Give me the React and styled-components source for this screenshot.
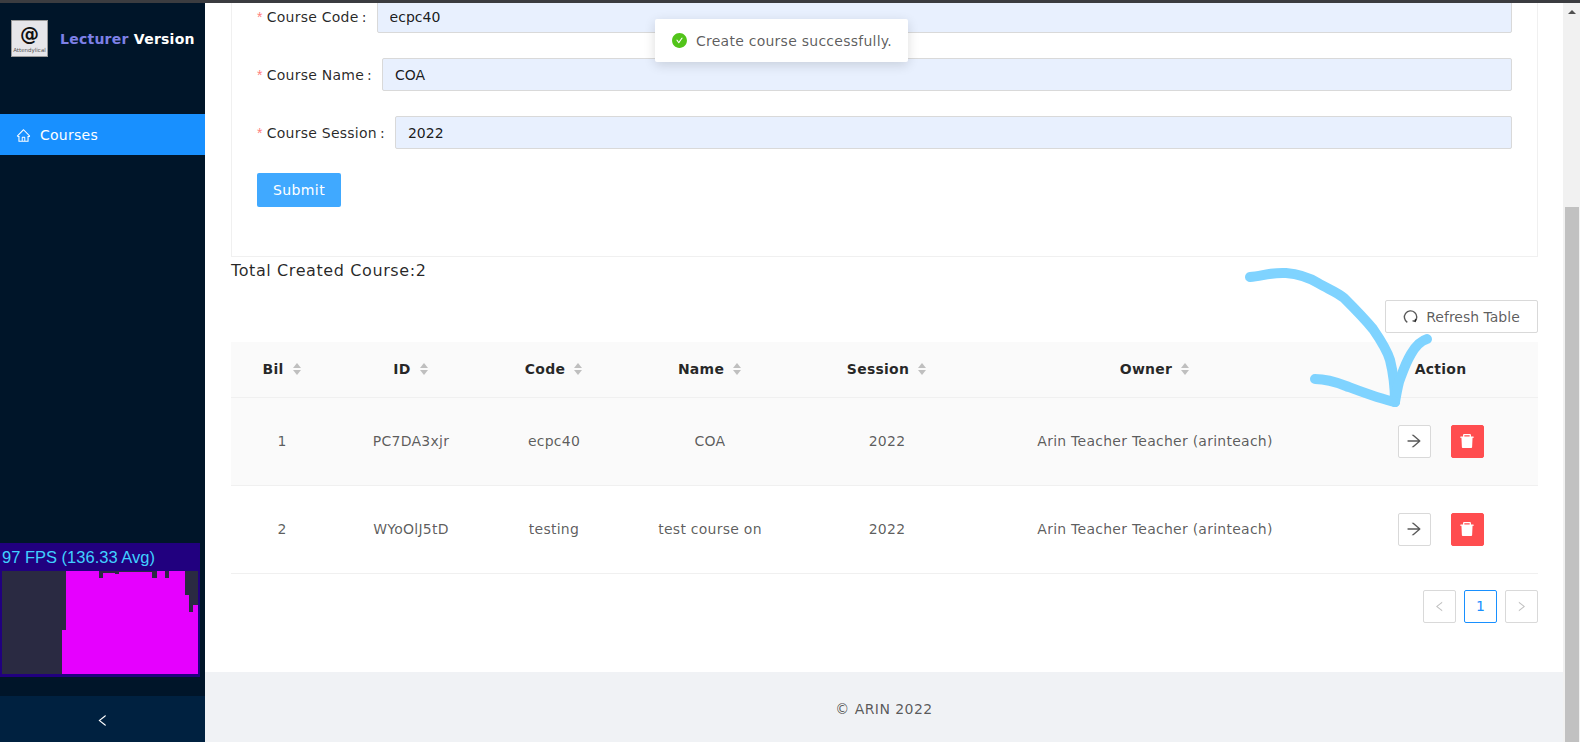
import React from "react";
import styled, { createGlobalStyle } from "styled-components";
import {
  AiOutlineHome,
  AiOutlineArrowRight,
  AiFillDelete,
  AiOutlineLeft,
  AiOutlineRight,
  AiFillCheckCircle,
} from "react-icons/ai";

const GlobalStyle = createGlobalStyle`
  html, body {
    margin: 0;
    height: 100%;
    overflow: hidden;
  }
  body {
    font-family: "DejaVu Sans", Verdana, sans-serif;
    font-size: 14px;
    letter-spacing: 0.25px;
    color: rgba(0, 0, 0, 0.85);
    background: #fff;
  }
  * {
    box-sizing: border-box;
  }
`;

const Page = styled.div`
  position: relative;
  display: flex;
  flex-direction: column;
  width: 100%;
  height: 742px;
  overflow: hidden;
`;

const TopEdge = styled.div`
  flex: 0 0 3px;
  background: #3b3c40;
`;

const Body = styled.div`
  flex: 1;
  display: flex;
  min-height: 0;
`;

const Sidebar = styled.aside`
  flex: 0 0 205px;
  display: flex;
  flex-direction: column;
  background: #001529;
`;

const Brand = styled.div`
  display: flex;
  align-items: center;
  gap: 12px;
  height: 37px;
  margin: 17px 0 57px 11px;
`;

const Logo = styled.div`
  width: 37px;
  height: 37px;
  display: flex;
  flex-direction: column;
  align-items: center;
  background: #e6e6ea;
  border: 1px solid #9a9a9a;
  color: #111;
  letter-spacing: 0;
`;

const LogoAt = styled.span`
  font-size: 19px;
  font-weight: 700;
  line-height: 26px;
`;

const LogoName = styled.span`
  font-size: 5.5px;
  line-height: 7px;
  color: #555;
  white-space: nowrap;
`;

const BrandTitle = styled.div`
  font-size: 14px;
  font-weight: 700;
  color: #fff;
  white-space: nowrap;
`;

const BrandAccent = styled.span`
  color: #7d80e6;
`;

const MenuItem = styled.div`
  display: flex;
  align-items: center;
  gap: 9px;
  height: 41px;
  padding: 1px 0 0 16px;
  background: #1890ff;
  color: #fff;
  font-size: 14px;

  svg {
    font-size: 15px;
  }
`;

const SideSpacer = styled.div`
  flex: 1;
`;

const FpsPanel = styled.div`
  width: 200px;
  height: 134px;
  margin-bottom: 19px;
  padding: 0 2px;
  background: #21007f;
  letter-spacing: 0;
`;

const FpsLabel = styled.div`
  font-family: "Liberation Sans", Arial, sans-serif;
  font-size: 16.5px;
  line-height: 28px;
  height: 28px;
  color: #40d0ff;
  white-space: nowrap;
`;

const FpsGraph = styled.svg`
  display: block;
  width: 196px;
  height: 103px;
`;

const Collapse = styled.div`
  flex: 0 0 46px;
  display: flex;
  align-items: center;
  justify-content: center;
  padding-top: 3px;
  background: #002140;
  color: #fff;
  font-size: 15px;
`;

const Main = styled.main`
  flex: 1;
  min-width: 0;
  display: flex;
  flex-direction: column;
  overflow: hidden;
`;

const Content = styled.div`
  flex: 1;
  padding: 0 25px 0 26px;
`;

const FormCard = styled.form`
  height: 257px;
  margin-top: -3px;
  padding: 0 25px;
  border: 1px solid #f0f0f0;
  border-top: 0;
`;

const Row = styled.div`
  display: flex;
  align-items: center;
  height: 33px;
  margin-bottom: 25px;
`;

const Label = styled.label`
  display: flex;
  align-items: center;
  margin-right: 10px;
  white-space: nowrap;
  font-size: 14px;
`;

const Star = styled.span`
  margin-right: 4px;
  color: #ff7f80;
  font-family: "Liberation Sans", sans-serif;
`;

const Colon = styled.span`
  margin-left: 3px;
`;

const Input = styled.input`
  flex: 1;
  height: 33px;
  padding: 0 12px;
  border: 1px solid #d9d9d9;
  border-radius: 2px;
  background: #e8f0fe;
  color: rgba(0, 0, 0, 0.9);
  font: inherit;
  font-size: 14px;
  letter-spacing: 0;
`;

const Submit = styled.button`
  display: block;
  width: 84px;
  height: 34px;
  margin-top: -1px;
  border: 0;
  border-radius: 2px;
  background: #40a9ff;
  color: #fff;
  font: inherit;
  font-size: 14px;
  letter-spacing: 0.4px;
`;

const Total = styled.div`
  margin-top: 2px;
  font-size: 16px;
  line-height: 24px;
  letter-spacing: 0.6px;
`;

const Toolbar = styled.div`
  display: flex;
  justify-content: flex-end;
  margin: 17px 0 9px;
`;

const RefreshButton = styled.button`
  display: flex;
  align-items: center;
  justify-content: center;
  gap: 8px;
  width: 153px;
  height: 33px;
  border: 1px solid #d9d9d9;
  border-radius: 2px;
  background: #fff;
  color: rgba(0, 0, 0, 0.65);
  font: inherit;
  font-size: 14px;
`;

const RefreshIcon = styled.svg`
  width: 15px;
  height: 15px;
  fill: none;
  stroke: currentColor;
  stroke-width: 1.5;
`;

const Table = styled.table`
  width: 1307px;
  table-layout: fixed;
  border-collapse: collapse;
`;

const Th = styled.th`
  height: 55px;
  padding: 0 0 0 ${(p) => (p.$action ? "6px" : "0")};
  background: #fafafa;
  border-bottom: 1px solid #f0f0f0;
  font-size: 14px;
  font-weight: 700;
  text-align: center;
`;

const ThInner = styled.span`
  display: inline-flex;
  align-items: center;
  gap: 8px;
`;

const Sorter = styled.svg`
  width: 10px;
  height: 14px;
  fill: #bfbfbf;
`;

const Tr = styled.tr`
  background: ${(p) => (p.$hover ? "#fafafa" : "#fff")};
`;

const Td = styled.td`
  height: 88px;
  padding: 0 0 0 ${(p) => (p.$action ? "6px" : "0")};
  border-bottom: 1px solid #f0f0f0;
  color: rgba(0, 0, 0, 0.65);
  font-size: 14px;
  text-align: center;
`;

const Actions = styled.div`
  display: flex;
  justify-content: center;
  gap: 20px;
`;

const IconButton = styled.button`
  display: flex;
  align-items: center;
  justify-content: center;
  width: 33px;
  height: 33px;
  padding: 0;
  border: 1px solid ${(p) => (p.$danger ? "#ff4d4f" : "#d9d9d9")};
  border-radius: 2px;
  background: ${(p) => (p.$danger ? "#ff4d4f" : "#fff")};
  color: ${(p) => (p.$danger ? "#fff" : "rgba(0, 0, 0, 0.65)")};
  font-size: 18px;
`;

const Pagination = styled.div`
  display: flex;
  justify-content: flex-end;
  gap: 8px;
  margin-top: 16px;
`;

const PageItem = styled.div`
  display: flex;
  align-items: center;
  justify-content: center;
  width: 33px;
  height: 33px;
  border: 1px solid ${(p) => (p.$active ? "#1890ff" : "#d9d9d9")};
  border-radius: 2px;
  color: ${(p) => (p.$active ? "#1890ff" : "rgba(0, 0, 0, 0.25)")};
  font-size: 14px;

  svg {
    font-size: 13px;
  }
`;

const Footer = styled.footer`
  flex: 0 0 70px;
  display: flex;
  align-items: center;
  justify-content: center;
  padding-top: 3px;
  background: #f0f2f5;
  color: rgba(0, 0, 0, 0.65);
  font-size: 14px;
  letter-spacing: 0.45px;
`;

const Scrollbar = styled.div`
  flex: 0 0 17px;
  display: flex;
  flex-direction: column;
  background: #f1f1f1;
`;

const ScrollUp = styled.div`
  flex: 0 0 204px;
  display: flex;
  justify-content: center;
  padding-top: 7px;

  &::before {
    content: "";
    width: 0;
    height: 0;
    border-left: 4px solid transparent;
    border-right: 4px solid transparent;
    border-bottom: 4px solid #505050;
  }
`;

const ScrollThumb = styled.div`
  flex: 1;
  margin: 0 1px 0 2px;
  background: #c1c1c1;
`;

const Toast = styled.div`
  position: absolute;
  top: 19px;
  left: 655px;
  display: flex;
  align-items: center;
  gap: 8px;
  width: 253px;
  height: 43px;
  padding-left: 16px;
  background: #fff;
  border-radius: 2px;
  box-shadow: 0 3px 12px rgba(0, 0, 0, 0.14);
  color: rgba(0, 0, 0, 0.65);
  font-size: 14px;
  white-space: nowrap;

  svg {
    flex: none;
    font-size: 17px;
    color: #52c41a;
  }
`;

const Scribble = styled.svg`
  position: absolute;
  top: 0;
  left: 0;
  width: 1580px;
  height: 742px;
  pointer-events: none;
  fill: none;
  stroke: #7fd3ff;
  stroke-width: 10;
  stroke-linecap: round;
  stroke-linejoin: round;
`;

const columns = [
  { key: "Bil", width: 102 },
  { key: "ID", width: 156 },
  { key: "Code", width: 130 },
  { key: "Name", width: 182 },
  { key: "Session", width: 172 },
  { key: "Owner", width: 364 },
];

const courses = [
  { bil: 1, id: "PC7DA3xjr", code: "ecpc40", name: "COA", session: "2022" },
  { bil: 2, id: "WYoOlJ5tD", code: "testing", name: "test course on", session: "2022" },
];

const owner = "Arin Teacher Teacher (arinteach)";

// x, top, width of the fps bars, in graph coordinates
const bars = [
  [60, 59, 4],
  [64, 0, 33],
  [97, 7, 4],
  [101, 2, 12],
  [113, 3, 4],
  [117, 1, 33],
  [150, 7, 5],
  [155, 0, 8],
  [163, 7, 4],
  [167, 0, 16],
  [183, 24, 4],
  [187, 41, 4],
  [191, 34, 5],
];

const Sort = () => (
  <Sorter viewBox="0 0 10 14">
    <path d="M5 1 9 6H1z" />
    <path d="M1 8h8l-4 5z" />
  </Sorter>
);

const App = () => (
  <Page>
    <GlobalStyle />
    <TopEdge />
    <Body>
      <Sidebar>
        <Brand>
          <Logo>
            <LogoAt>@</LogoAt>
            <LogoName>Attendylical</LogoName>
          </Logo>
          <BrandTitle>
            <BrandAccent>Lecturer</BrandAccent> Version
          </BrandTitle>
        </Brand>
        <MenuItem>
          <AiOutlineHome />
          Courses
        </MenuItem>
        <SideSpacer />
        <FpsPanel>
          <FpsLabel>97 FPS (136.33 Avg)</FpsLabel>
          <FpsGraph viewBox="0 0 196 103">
            <rect width="196" height="103" fill="#2a2a42" />
            {bars.map(([x, top, w]) => (
              <rect key={x} x={x} y={top} width={w} height={103 - top} fill="#e600ff" />
            ))}
          </FpsGraph>
        </FpsPanel>
        <Collapse>
          <AiOutlineLeft />
        </Collapse>
      </Sidebar>

      <Main>
        <Content>
          <FormCard>
            <Row>
              <Label>
                <Star>*</Star>Course Code<Colon>:</Colon>
              </Label>
              <Input defaultValue="ecpc40" />
            </Row>
            <Row>
              <Label>
                <Star>*</Star>Course Name<Colon>:</Colon>
              </Label>
              <Input defaultValue="COA" />
            </Row>
            <Row>
              <Label>
                <Star>*</Star>Course Session<Colon>:</Colon>
              </Label>
              <Input defaultValue="2022" />
            </Row>
            <Submit type="button">Submit</Submit>
          </FormCard>

          <Total>Total Created Course:2</Total>

          <Toolbar>
            <RefreshButton>
              <RefreshIcon viewBox="0 0 16 16">
                <path d="M4.6 14.2A6.6 6.6 0 1 1 12.6 13.4" />
                <path d="M10.2 12.6 13 13.2 13.4 10.6" />
              </RefreshIcon>
              Refresh Table
            </RefreshButton>
          </Toolbar>

          <Table>
            <colgroup>
              {columns.map((c) => (
                <col key={c.key} width={c.width} />
              ))}
              <col />
            </colgroup>
            <thead>
              <tr>
                {columns.map((c) => (
                  <Th key={c.key}>
                    <ThInner>
                      {c.key}
                      <Sort />
                    </ThInner>
                  </Th>
                ))}
                <Th $action>Action</Th>
              </tr>
            </thead>
            <tbody>
              {courses.map((course, i) => (
                <Tr key={course.id} $hover={i === 0}>
                  <Td>{course.bil}</Td>
                  <Td>{course.id}</Td>
                  <Td>{course.code}</Td>
                  <Td>{course.name}</Td>
                  <Td>{course.session}</Td>
                  <Td>{owner}</Td>
                  <Td $action>
                    <Actions>
                      <IconButton>
                        <AiOutlineArrowRight />
                      </IconButton>
                      <IconButton $danger>
                        <AiFillDelete />
                      </IconButton>
                    </Actions>
                  </Td>
                </Tr>
              ))}
            </tbody>
          </Table>

          <Pagination>
            <PageItem>
              <AiOutlineLeft />
            </PageItem>
            <PageItem $active>1</PageItem>
            <PageItem>
              <AiOutlineRight />
            </PageItem>
          </Pagination>
        </Content>
        <Footer>© ARIN 2022</Footer>
      </Main>

      <Scrollbar>
        <ScrollUp />
        <ScrollThumb />
      </Scrollbar>
    </Body>

    <Toast>
      <AiFillCheckCircle />
      Create course successfully.
    </Toast>

    <Scribble viewBox="0 0 1580 742">
      <path d="M1250 277C1262 276 1272 272 1286 273C1298 274 1308 277 1318 283C1328 289 1337 292 1344 298C1353 307 1364 318 1373 329C1382 342 1387 350 1390 360C1393 372 1395 388 1395 402" />
      <path d="M1427 339C1420 341 1415 347 1411 354C1405 364 1402 374 1399 382C1397 390 1396 396 1395 402" />
      <path d="M1315 379C1326 379 1336 382 1346 386C1362 392 1380 399 1395 402" />
    </Scribble>
  </Page>
);

export default App;
